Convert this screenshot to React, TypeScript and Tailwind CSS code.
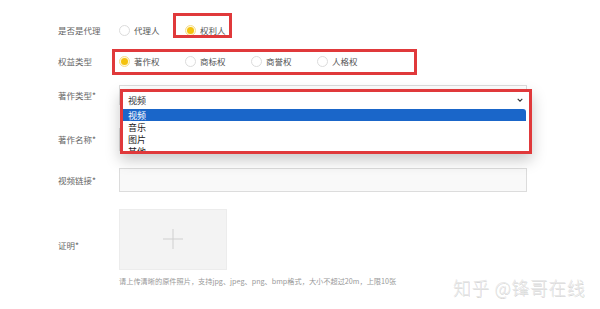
import React from "react";

const font = { fontFamily: '"Noto Sans CJK SC", "Noto Sans", sans-serif' };

function Radio({ label, checked }: { label: string; checked?: boolean }) {
  return (
    <div className="flex w-[66px] items-center gap-[4px]">
      {checked ? (
        <span className="flex h-[11px] w-[11px] items-center justify-center rounded-full border border-[#f6de8c] bg-[#fff8dc]">
          <span className="h-[7px] w-[7px] rounded-full bg-[#f4c20d]" />
        </span>
      ) : (
        <span className="h-[11px] w-[11px] rounded-full border border-[#dcdcdc] bg-white" />
      )}
      <span className="text-[8.5px] leading-none text-[#555]">{label}</span>
    </div>
  );
}

function Label({ children, className = "" }: { children: React.ReactNode; className?: string }) {
  return (
    <div className={`w-[61px] shrink-0 text-[8.5px] leading-none text-[#666] ${className}`}>{children}</div>
  );
}

export default function App() {
  return (
    <div className="relative h-[309px] w-[600px] overflow-hidden bg-white" style={font}>
      <div className="flex flex-col pl-[58px] pt-[20px]">
        <div className="flex h-[20px] items-center">
          <Label>是否是代理</Label>
          <Radio label="代理人" />
          <Radio label="权利人" checked />
        </div>
        <div className="mt-[11px] flex h-[20px] items-center">
          <Label>权益类型</Label>
          <Radio label="著作权" checked />
          <Radio label="商标权" />
          <Radio label="商誉权" />
          <Radio label="人格权" />
        </div>
        <div className="mt-[14px] flex h-[20px] items-center">
          <Label>著作类型*</Label>
          <div className="h-[20px] w-[408px] border border-[#dcdcdc] bg-white" />
        </div>
        <div className="mt-[23px] flex h-[23px] items-center">
          <Label>著作名称*</Label>
          <div className="h-[23px] w-[408px] border border-[#dcdcdc] bg-[#fafafa]" />
        </div>
        <div className="mt-[17px] flex h-[24px] items-center">
          <Label>视频链接*</Label>
          <div className="h-[24px] w-[408px] border border-[#dcdcdc] bg-[#f9f9f9]" />
        </div>
        <div className="mt-[17px] flex h-[61px] items-center">
          <Label className="pt-[11px]">证明*</Label>
          <div className="relative flex h-[61px] w-[108px] items-center justify-center border border-[#ececec] bg-[#f3f3f3]">
            <svg width="20" height="20" viewBox="0 0 20 20" className="-translate-y-[1px]">
              <path d="M10 0V20M0 10H20" stroke="#cfcfcf" strokeWidth="1" />
            </svg>
          </div>
        </div>
        <div className="mt-[6px] pl-[61px] text-[7.2px] leading-[10px] text-[#999]">
          请上传清晰的原件照片，支持jpg、jpeg、png、bmp格式，大小不超过20m，上限10张
        </div>
      </div>

      {/* open select dropdown */}
      <div className="absolute left-[120px] top-[89px] h-[65px] w-[412px] border-[3px] border-[#e0393b] bg-white shadow-[0_6px_14px_rgba(0,0,0,0.22)]">
        <div className="flex h-[16px] items-center justify-between pl-[5px] pr-[6px]">
          <span className="text-[9px] leading-none text-[#333]">视频</span>
          <svg width="6" height="4" viewBox="0 0 6 4">
            <path d="M0.7 0.8L3 3.1L5.3 0.8" fill="none" stroke="#333" strokeWidth="1.1" />
          </svg>
        </div>
        <div className="mr-[3px] mt-[1px] h-[42px] overflow-hidden">
          <div className="flex h-[12px] items-center rounded-tr-[3px] bg-[#1a66c9] pl-[5px] text-[9px] leading-none text-white">视频</div>
          <div className="flex h-[12px] items-center pl-[5px] text-[9px] leading-none text-[#222]">音乐</div>
          <div className="flex h-[12px] items-center pl-[5px] text-[9px] leading-none text-[#222]">图片</div>
          <div className="flex h-[12px] items-center pl-[5px] text-[9px] leading-none text-[#222]">其他</div>
        </div>
      </div>

      {/* annotation boxes */}
      <div className="absolute left-[173px] top-[13px] h-[25px] w-[59px] border-[3px] border-[#e0393b]" />
      <div className="absolute left-[112px] top-[49px] h-[26px] w-[305px] border-[3px] border-[#e0393b]" />

      {/* watermark */}
      <div className="absolute left-[453px] top-[276px] text-[18px] font-extralight leading-[22px] tracking-[0.5px] text-[#e6e6e6] [text-shadow:0.6px_0.6px_0_rgba(0,0,0,0.16)]">
        知乎 @锋哥在线
      </div>
    </div>
  );
}
